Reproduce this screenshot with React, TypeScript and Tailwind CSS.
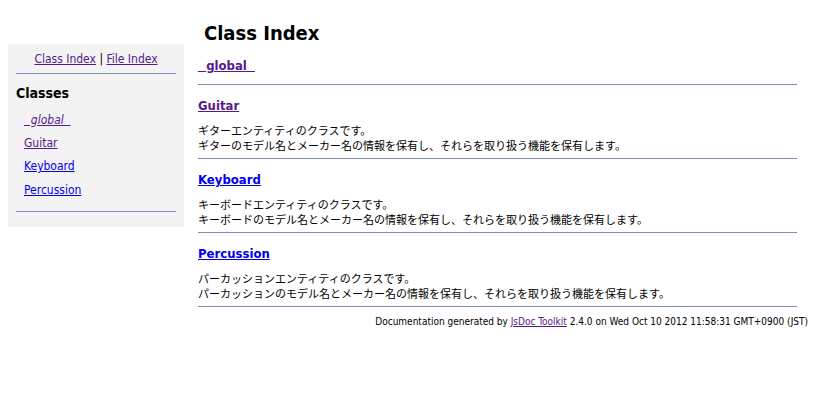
const font = "font-['Tahoma','DejaVu_Sans_Condensed','Liberation_Sans','Noto_Sans_CJK_JP',sans-serif]";

const visited = "text-[#551a8b] underline";
const fresh = "text-[#0000ee] underline";

const classes = [
  {
    name: "Guitar",
    visited: true,
    lines: [
      "ギターエンティティのクラスです。",
      "ギターのモデル名とメーカー名の情報を保有し、それらを取り扱う機能を保有します。",
    ],
  },
  {
    name: "Keyboard",
    visited: false,
    lines: [
      "キーボードエンティティのクラスです。",
      "キーボードのモデル名とメーカー名の情報を保有し、それらを取り扱う機能を保有します。",
    ],
  },
  {
    name: "Percussion",
    visited: false,
    lines: [
      "パーカッションエンティティのクラスです。",
      "パーカッションのモデル名とメーカー名の情報を保有し、それらを取り扱う機能を保有します。",
    ],
  },
];

function Sidebar() {
  return (
    <div className="mt-[44px] ml-2 w-[176px] shrink-0 bg-[#f3f3f3] px-2 pt-[7px] pb-[15px]">
      <div className="text-center text-[12px] leading-[16px] pb-[6px] border-b border-[#7f8fb1]">
        <a href="#" className={visited}>Class Index</a>
        <span className="text-black"> | </span>
        <a href="#" className={visited}>File Index</a>
      </div>
      <h2 className="mt-[10px] text-[14px] font-bold leading-[18px] text-black">Classes</h2>
      <ul className="mt-[10px] pl-2 text-[12px] leading-[16px] pb-[6px] border-b border-[#7f8fb1]">
        <li className="h-[23px]">
          <a href="#" className={visited + " italic"}>&nbsp;&nbsp;global&nbsp;&nbsp;</a>
        </li>
        <li className="h-[23px]"><a href="#" className={visited}>Guitar</a></li>
        <li className="h-[24px]"><a href="#" className={fresh}>Keyboard</a></li>
        <li className="h-[23px]"><a href="#" className={fresh}>Percussion</a></li>
      </ul>
    </div>
  );
}

function Main() {
  return (
    <div className="ml-[14px] w-[599px]">
      <h1 className="pt-[20px] pl-[6px] text-[20px] font-bold leading-[26px] text-black">Class Index</h1>
      <div className="pt-[12px] pb-[10px] text-[13px] font-bold leading-[16px] border-b border-[#7f8fb1]">
        <a href="#" className={visited}>&nbsp;&nbsp;global&nbsp;&nbsp;</a>
      </div>
      {classes.map((c) => (
        <div key={c.name} className="pt-[13px] pb-[4px] border-b border-[#7f8fb1]">
          <div className="text-[13px] font-bold leading-[16px]">
            <a href="#" className={c.visited ? visited : fresh}>
              {c.name}
            </a>
          </div>
          <div className="mt-[10px] text-[11px] leading-[15px] text-black">
            {c.lines.map((l) => (
              <div key={l}>{l}</div>
            ))}
          </div>
        </div>
      ))}
    </div>
  );
}

export default function App() {
  return (
    <div className={"min-h-[399px] bg-white " + font}>
      <div className="flex items-start">
        <Sidebar />
        <Main />
      </div>
      <div className="mt-[8px] pr-[9px] text-right text-[10px] leading-[14px] text-black">
        Documentation generated by <a href="#" className={visited}>JsDoc Toolkit</a> 2.4.0 on Wed Oct 10 2012 11:58:31 GMT+0900 (JST)
      </div>
    </div>
  );
}
